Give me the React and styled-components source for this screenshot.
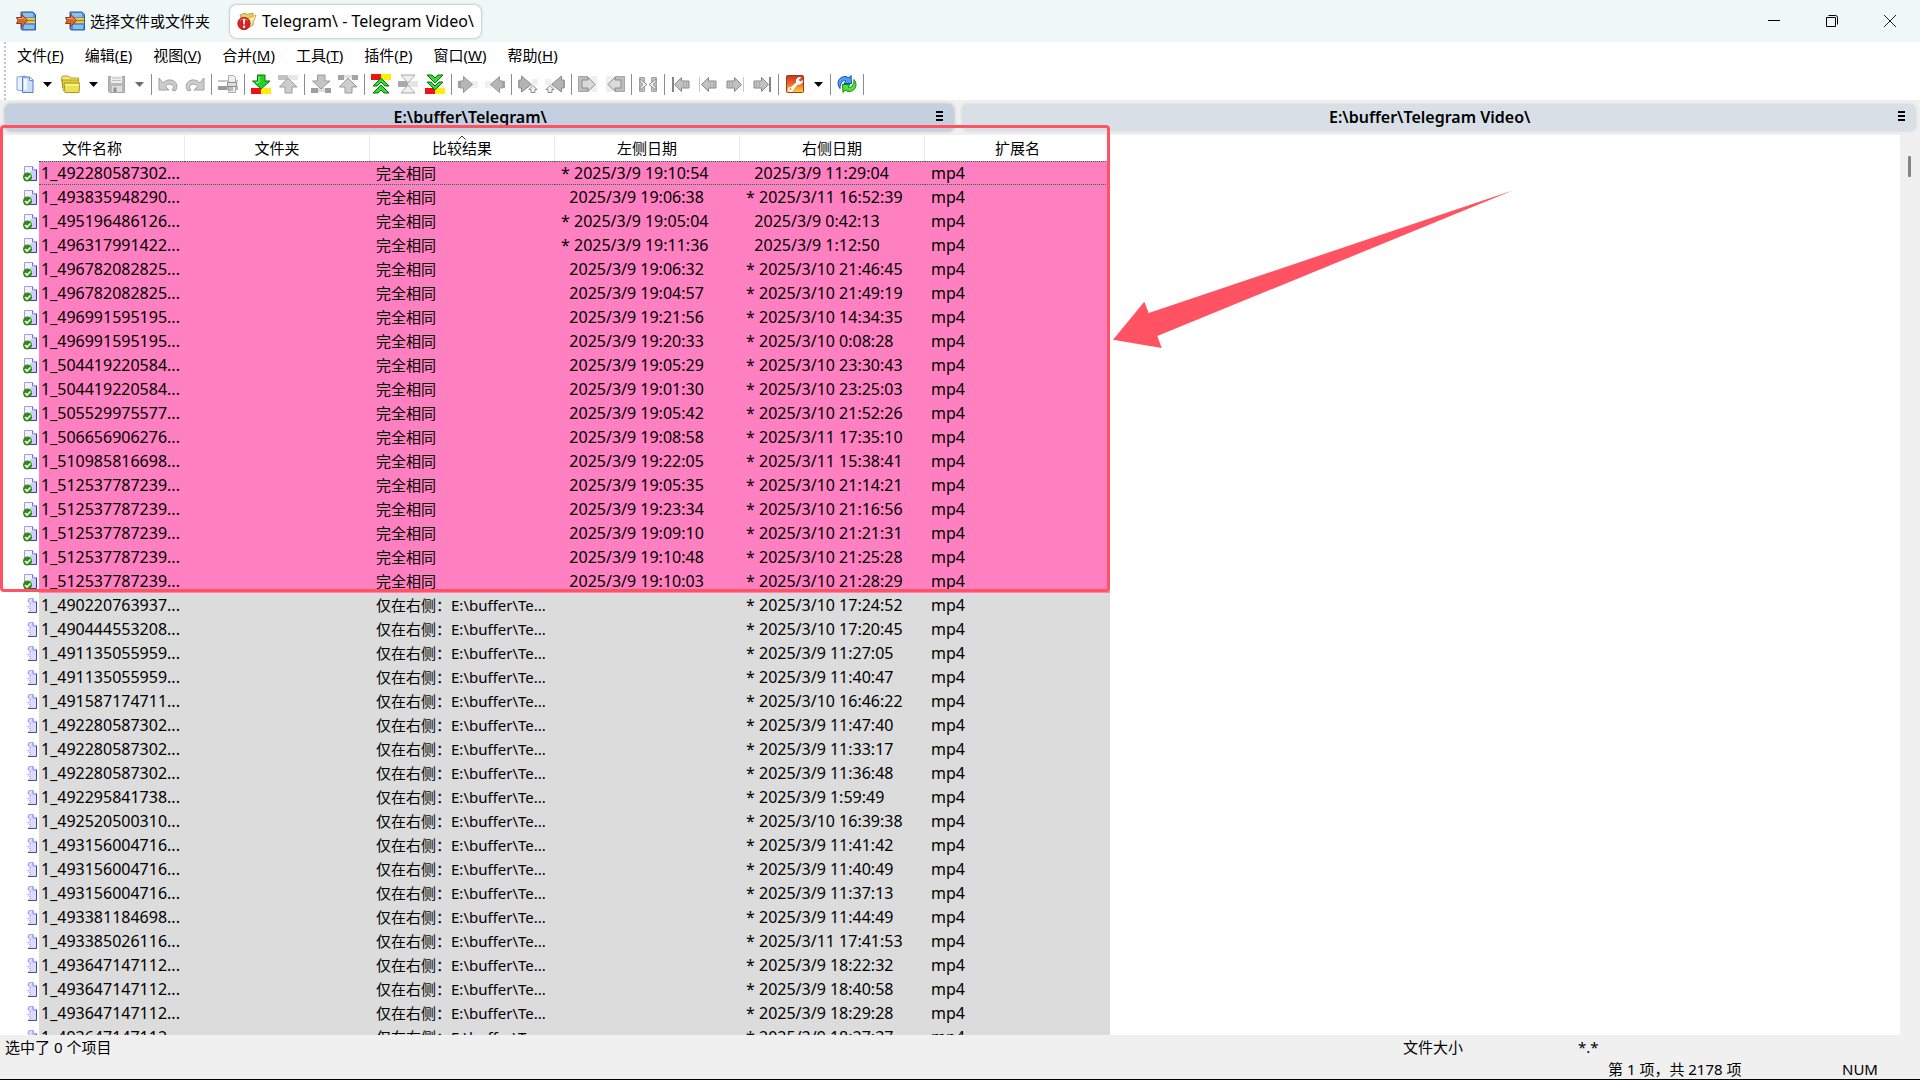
import styled, { createGlobalStyle, css } from "styled-components";

const GlobalStyle = createGlobalStyle`
  * {
    box-sizing: border-box;
  }
  body {
    margin: 0;
    overflow: hidden;
    font-family: "Noto Sans", "Noto Sans CJK SC", sans-serif;
    font-size: 15px;
    line-height: 22px;
    color: #000;
  }
  button {
    margin: 0;
    padding: 0;
    border: 0;
    background: none;
    font: inherit;
    color: inherit;
  }
  svg {
    display: block;
    flex: none;
  }
`;

const Window = styled.div`
  display: flex;
  flex-direction: column;
  height: 100vh;
  background: #f0f0f0;
  border-bottom: 1px solid #000;
`;

/* title bar */

const TitleBar = styled.header`
  display: flex;
  align-items: center;
  height: 42px;
  padding: 0 1px 0 16px;
  background: #eff8f7;
`;

const TabList = styled.nav`
  display: flex;
  align-items: center;
  flex: 1;
  gap: 13px;
  margin-left: 22px;
`;

const Tab = styled.button`
  display: flex;
  align-items: center;
  gap: 5px;
  height: 33px;
  padding: 0 7px;
  border-radius: 7px;
  white-space: nowrap;
  ${({ $active }) =>
    $active &&
    css`
      background: #fff;
      box-shadow: 0 0 2px 1px #c4cccb;
      font-size: 16px;
    `}
`;

const WindowButton = styled.button`
  display: flex;
  align-items: center;
  justify-content: center;
  width: 58px;
  height: 42px;
`;

/* menu and toolbar */

const Bars = styled.div`
  display: flex;
  height: 58px;
  padding-left: 4px;
  background: #fff;
`;

const Grip = styled.div`
  width: 7px;
  border-left: 2px dotted #c6c6c6;
`;

const BarRows = styled.div`
  flex: 1;
`;

const MenuBar = styled.nav`
  display: flex;
  height: 28px;
`;

const MenuItem = styled.button`
  height: 26px;
  padding: 0 15px 0 6px;
  white-space: nowrap;
`;

const Toolbar = styled.div`
  display: flex;
  align-items: center;
  height: 28px;
`;

const ToolButton = styled.button`
  width: 27px;
  height: 28px;
  padding: 4px 4px 4px 3px;
`;

const DropButton = styled.button`
  display: flex;
  align-items: center;
  justify-content: center;
  width: 19px;
  height: 28px;
`;

const ToolSeparator = styled.div`
  width: 6px;
  height: 21px;
  padding-left: 2px;

  &::before {
    content: "";
    display: block;
    width: 1px;
    height: 100%;
    background: #8c8c8c;
  }
`;

/* compare area */

const Workspace = styled.main`
  position: relative;
  display: flex;
  flex-direction: column;
  flex: 1;
  min-height: 0;
`;

const PathRow = styled.div`
  display: flex;
  gap: 8px;
  padding: 4px 4px 4px 5px;
`;

const PathPanel = styled.div`
  display: flex;
  align-items: flex-start;
  flex: ${({ $grow }) => $grow} 1 0;
  height: 27px;
  padding-top: 2px;
  border-radius: 6px;
  background: ${({ $active }) => ($active ? "#c4d0e0" : "#d8dfe7")};
  box-shadow: 0 0 3px 1px ${({ $active }) => ($active ? "#c9c9c9" : "#e0e0e0")};
`;

const PathTitle = styled.h2`
  flex: 1;
  margin: 0;
  font-size: 16px;
  font-weight: 600;
  line-height: 22px;
  text-align: center;
`;

const PathMenu = styled.button`
  width: 18px;
  height: 20px;
`;

const Body = styled.div`
  display: flex;
  flex: 1;
  min-height: 0;
`;

const ListPane = styled.div`
  flex: 1;
  overflow: hidden;
  background: #fff;
`;

const FileTable = styled.table`
  width: 1110px;
  table-layout: fixed;
  border-collapse: separate;
  border-spacing: 0;
`;

const HeadCell = styled.th`
  position: relative;
  height: 26px;
  padding: 0;
  border-right: 1px solid #ebebeb;
  font-weight: 400;
  line-height: 24px;

  &:last-child {
    border-right: 0;
  }
`;

const SortMark = styled.svg`
  position: absolute;
  top: 0;
  left: calc(50% - 4px);
`;

const IconCell = styled.td`
  height: 24px;
  padding: 0 0 0 22px;
  background: #fff;
`;

const Cell = styled.td`
  height: 24px;
  padding: 0 0 0 ${({ $first }) => ($first ? 2 : 6)}px;
  overflow: hidden;
  font-size: ${({ $cjk }) => ($cjk ? 15 : 16)}px;
  line-height: 22px;
  white-space: pre;
`;

const Row = styled.tr`
  ${Cell} {
    background: ${({ $same }) => ($same ? "#ff80c0" : "#dcdcdc")};
    ${({ $focused }) =>
      $focused &&
      css`
        border-top: 1px dotted #007f3f;
        border-bottom: 1px dotted #007f3f;
        line-height: 20px;
      `}
  }
`;

const ScrollTrack = styled.div`
  width: 20px;
  padding: 21px 0 0 8px;
`;

const ScrollThumb = styled.div`
  width: 3px;
  height: 21px;
  border-radius: 1px;
  background: #858585;
`;

/* red marks drawn over the list */

const MarkBox = styled.div`
  position: absolute;
  top: 25px;
  left: 0;
  width: 1110px;
  height: 467px;
  border: 3px solid #ff5263;
  border-radius: 4px;
  pointer-events: none;
`;

const MarkArrow = styled.svg`
  position: absolute;
  top: 90px;
  left: 1113px;
`;

/* status bar */

const StatusBar = styled.footer`
  height: 44px;
`;

const StatusLine = styled.div`
  display: flex;
  height: 22px;
  padding-left: 5px;
  line-height: 24px;
`;

const StatusText = styled.span`
  flex: ${({ $width }) => ($width ? `0 0 ${$width}px` : "1")};
  white-space: nowrap;
`;

const menus = [
  ["文件", "F"],
  ["编辑", "E"],
  ["视图", "V"],
  ["合并", "M"],
  ["工具", "T"],
  ["插件", "P"],
  ["窗口", "W"],
  ["帮助", "H"],
];

const columns = ["文件夹", "比较结果", "左侧日期", "右侧日期", "扩展名"];

const sameFiles = [
  ["1_492280587302...", "* 2025/3/9 19:10:54", "  2025/3/9 11:29:04"],
  ["1_493835948290...", "  2025/3/9 19:06:38", "* 2025/3/11 16:52:39"],
  ["1_495196486126...", "* 2025/3/9 19:05:04", "  2025/3/9 0:42:13"],
  ["1_496317991422...", "* 2025/3/9 19:11:36", "  2025/3/9 1:12:50"],
  ["1_496782082825...", "  2025/3/9 19:06:32", "* 2025/3/10 21:46:45"],
  ["1_496782082825...", "  2025/3/9 19:04:57", "* 2025/3/10 21:49:19"],
  ["1_496991595195...", "  2025/3/9 19:21:56", "* 2025/3/10 14:34:35"],
  ["1_496991595195...", "  2025/3/9 19:20:33", "* 2025/3/10 0:08:28"],
  ["1_504419220584...", "  2025/3/9 19:05:29", "* 2025/3/10 23:30:43"],
  ["1_504419220584...", "  2025/3/9 19:01:30", "* 2025/3/10 23:25:03"],
  ["1_505529975577...", "  2025/3/9 19:05:42", "* 2025/3/10 21:52:26"],
  ["1_506656906276...", "  2025/3/9 19:08:58", "* 2025/3/11 17:35:10"],
  ["1_510985816698...", "  2025/3/9 19:22:05", "* 2025/3/11 15:38:41"],
  ["1_512537787239...", "  2025/3/9 19:05:35", "* 2025/3/10 21:14:21"],
  ["1_512537787239...", "  2025/3/9 19:23:34", "* 2025/3/10 21:16:56"],
  ["1_512537787239...", "  2025/3/9 19:09:10", "* 2025/3/10 21:21:31"],
  ["1_512537787239...", "  2025/3/9 19:10:48", "* 2025/3/10 21:25:28"],
  ["1_512537787239...", "  2025/3/9 19:10:03", "* 2025/3/10 21:28:29"],
];

const rightFiles = [
  ["1_490220763937...", "* 2025/3/10 17:24:52"],
  ["1_490444553208...", "* 2025/3/10 17:20:45"],
  ["1_491135055959...", "* 2025/3/9 11:27:05"],
  ["1_491135055959...", "* 2025/3/9 11:40:47"],
  ["1_491587174711...", "* 2025/3/10 16:46:22"],
  ["1_492280587302...", "* 2025/3/9 11:47:40"],
  ["1_492280587302...", "* 2025/3/9 11:33:17"],
  ["1_492280587302...", "* 2025/3/9 11:36:48"],
  ["1_492295841738...", "* 2025/3/9 1:59:49"],
  ["1_492520500310...", "* 2025/3/10 16:39:38"],
  ["1_493156004716...", "* 2025/3/9 11:41:42"],
  ["1_493156004716...", "* 2025/3/9 11:40:49"],
  ["1_493156004716...", "* 2025/3/9 11:37:13"],
  ["1_493381184698...", "* 2025/3/9 11:44:49"],
  ["1_493385026116...", "* 2025/3/11 17:41:53"],
  ["1_493647147112...", "* 2025/3/9 18:22:32"],
  ["1_493647147112...", "* 2025/3/9 18:40:58"],
  ["1_493647147112...", "* 2025/3/9 18:29:28"],
  ["1_493647147112...", "* 2025/3/9 18:27:37"],
];

const GRAY = "#b4b4b4";
const EDGE = "#8e8e8e";
const PALE = "#e4e4e4";

function Icon({ children, size = 20 }) {
  return (
    <svg width={size} height={size} viewBox="0 0 20 20" aria-hidden="true">
      {children}
    </svg>
  );
}

const AppIcon = () => (
  <Icon>
    <path d="M5 1h12l2.500 2.500V19H6l-1-1z" fill="#4d94dc" stroke="#2c5f9e" />
    <path d="M7 3h10M7 5h10M8 15h10M8 17h10" stroke="#d3e8fb" />
    <path d="M6 7h13v5H6z" fill="#f6c33b" />
    <path d="M8 9.500h11" stroke="#a87614" />
    <path d="M.5 6.500h5V3l6 6.500-6 6.500v-3.500h-5l1.500-3z" fill="#d9662d" stroke="#8d3d1d" />
    <path d="M2 7.500h4.500V6l3 3" stroke="#f2a673" fill="none" />
  </Icon>
);

const WarnFolderIcon = () => (
  <Icon>
    <path d="M3 4l5-2 2 1.500L16 2v12l-8 4z" fill="#e8cf6a" stroke="#a88f35" strokeWidth=".8" />
    <path d="M9 8l10-4-4 11-8 3z" fill="#fbeea0" stroke="#b89f3e" strokeWidth=".8" />
    <circle cx="7" cy="12.500" r="6.300" fill="#d42323" stroke="#a11414" strokeWidth=".6" />
    <path d="M3 9.500a5 4 0 0 1 8 0" fill="none" stroke="#ef7b7b" />
    <path d="M6 8h2.200l-.4 5.500H6.400z" fill="#fff" />
    <circle cx="7.100" cy="15.700" r="1.200" fill="#fff" />
  </Icon>
);

const NewIcon = () => (
  <Icon>
    <path d="M3 3l8-1v15l-8-1z" fill="#e9f1fd" stroke="#7fa4df" />
    <path d="M8.500 3h7L19 6v12.500H8.500z" fill="#c9ddf9" stroke="#4f7dc8" />
    <path d="M10 5h3v11h-3z" fill="#f4f9ff" />
    <path d="M15.500 3v3.500H19" fill="#f7fbff" stroke="#5f8ad0" />
  </Icon>
);

const FolderIcon = () => (
  <Icon>
    <path d="M1.500 4l1-2h6l2 2h8v3h-16z" fill="#f4ea73" stroke="#b39f24" />
    <path d="M2.500 14V6h16v10" fill="#e5d33d" stroke="#b39f24" />
    <path d="M1.500 5l2 12" stroke="#b39f24" />
    <path d="M4 9h16l-1 9.500H5z" fill="#eee04e" stroke="#a99523" />
    <path d="M5.500 11h13" stroke="#fbf6a8" strokeWidth="1.500" />
  </Icon>
);

const SaveIcon = () => (
  <Icon>
    <path d="M2.500 2.500h16v16h-15l-1-1z" fill="#b8b8b8" stroke="#a3a3a3" />
    <path d="M5 2h11v7H5z" fill="#efefef" />
    <path d="M6 4h9M6 6.500h9" stroke="#c2c2c2" />
    <path d="M6 12h10v6H6z" fill="#dedede" />
    <path d="M7.500 13.500h3V18h-3z" fill="#919191" />
  </Icon>
);

const undoPath =
  "M1 4v12h10l-3.500-3.500c2-3 6-3.500 8.500.5l-2 3 3 1c4-5 1-10-4-11-3-.5-6 .8-8 3z";

const UndoIcon = () => (
  <Icon>
    <path d={undoPath} fill="#cccccc" stroke="#a2a2a2" strokeLinejoin="round" />
  </Icon>
);

const RedoIcon = () => (
  <Icon>
    <path
      d={undoPath}
      transform="matrix(-1 0 0 1 20 0)"
      fill="#cccccc"
      stroke="#a2a2a2"
      strokeLinejoin="round"
    />
  </Icon>
);

const CompareIcon = () => (
  <Icon>
    <path d="M0 6h20v2H0z" fill="#c7c7c7" />
    <path d="M0 12h20v4H0z" fill="#b9b9b9" />
    <path d="M0 12h9v4H0z" fill="#999" />
    <path d="M10.500 1.500h5l2 2v15h-7z" fill="#efefef" stroke="#aaa" />
    <path d="M9.500 8.500h9v4h-9z" fill="#ddd" stroke={EDGE} />
    <path d="M11 13h4v4h-4z" fill="#b8b8b8" />
  </Icon>
);

const arrowDown = "M6.500 1h7.500v6h5L10 15 1.500 7h5z";
const arrowUp = "M7 19v-6H1.500L10 4l9 9H14v6z";

/* blocks: the coloured bars that show which pane a jump goes to */
const Blocks = ({ y, left, right, height = 5 }) => (
  <>
    <rect x="0" y={y} width="10" height={height} fill={left} />
    <rect x="10" y={y} width="10" height={height} fill={right} />
  </>
);

const NextDiffIcon = () => (
  <Icon>
    <Blocks y={14} left="#ee1111" right="#ffee00" height={6} />
    <path d={arrowDown} fill="#25d325" stroke="#087208" />
    <path d="M8 2.500v6H5" stroke="#a8f5a0" fill="none" />
  </Icon>
);

const PrevDiffIcon = () => (
  <Icon>
    <Blocks y={1} left="#c2c2c2" right="#e8e8e8" height={5} />
    <path d={arrowUp} fill="#cdcdcd" stroke="#9c9c9c" />
  </Icon>
);

const NextConflictIcon = () => (
  <Icon>
    <path d="M0 14h7v5H0zM14 14h6v5h-6z" fill="#9e9e9e" />
    <path d="M7 14h7v4H7z" fill="#dedede" />
    <path d={arrowDown} fill="#c4c4c4" stroke="#999" />
  </Icon>
);

const PrevConflictIcon = () => (
  <Icon>
    <path d="M0 1h6v5H0zM14 1h6v5h-6z" fill="#a4a4a4" />
    <path d="M6 1h8v3H6z" fill="#e2e2e2" />
    <path d={arrowUp} fill="#cdcdcd" stroke="#999" />
  </Icon>
);

const FirstDiffIcon = () => (
  <Icon>
    <Blocks y={0} left="#ee1111" right="#ffee00" height={6} />
    <path d="M2 12l8-8 8 8h-4l-4-4-4 4z" fill="#35dc35" stroke="#087208" />
    <path d="M2 19l8-8 8 8h-5l-3-3-3 3z" fill="#35dc35" stroke="#087208" />
  </Icon>
);

const CurrentDiffIcon = () => (
  <Icon>
    <Blocks y={7} left="#a9a9a9" right={PALE} height={6} />
    <path d="M3 1h14l-7 8zM10 11l7 8H3z" fill="#efefef" stroke="#ababab" />
  </Icon>
);

const LastDiffIcon = () => (
  <Icon>
    <Blocks y={14} left="#ee1111" right="#ffee00" height={6} />
    <path d="M2 1h5l3 3 3-3h5l-8 8z" fill="#35dc35" stroke="#087208" />
    <path d="M2 8h4l4 4 4-4h4l-8 8z" fill="#35dc35" stroke="#087208" />
  </Icon>
);

/* flip mirrors the drawing, so each pair of copy buttons shares one path */
const Flip = ({ on, children }) => (
  <g transform={on ? "matrix(-1 0 0 1 20 0)" : undefined}>{children}</g>
);

const CopyIcon = ({ left }) => (
  <Icon>
    <Flip on={left}>
      <path d="M0 7h6v7H0z" fill="#a3a3a3" />
      <path d="M13 7h7v7h-7z" fill="#f0f0f0" />
      <path d="M5.500 7V2.500l9 8-9 8V14H2V7z" fill="#b7b7b7" stroke="#959595" />
    </Flip>
  </Icon>
);

const CopyNextIcon = ({ left }) => (
  <Icon>
    <Flip on={left}>
      <path d="M0 6h5v8H0z" fill="#b1b1b1" />
      <path d="M14 5h6v6h-6z" fill="#efefef" />
      <path d="M3.500 6V2l10 8.500-10 7.500v-4H1V6z" fill={GRAY} stroke="#8d8d8d" />
      <path d="M15 11.500l4 4h-2v3h-4v-3h-2z" fill="#eee" stroke="#8d8d8d" />
    </Flip>
  </Icon>
);

const CopyAllIcon = ({ left }) => (
  <Icon>
    <Flip on={left}>
      <path d="M13 2h6v16h-6z" fill="#efefef" />
      <path d="M.5 2.500h9v15h-9z" fill="#bdbdbd" stroke="#a6a6a6" />
      <path d="M4 6h6V3l7 7.500-7 7V14H4z" fill="#dadada" stroke="#8d8d8d" />
    </Flip>
  </Icon>
);

const MergeIcon = () => (
  <Icon>
    <path d="M1.500 3.500h5v14h-5zM13.500 3.500h5v14h-5z" fill="#c2c2c2" stroke="#a6a6a6" />
    <path
      d="M2 5l7 5.500L2 16v-3l3-2.500L2 8zM18 5l-7 5.500 7 5.500v-3l-3-2.500L18 8z"
      fill="#eee"
      stroke="#8c8c8c"
    />
  </Icon>
);

const FileNavIcon = ({ right, edge }) => (
  <Icon>
    <Flip on={right}>
      <path d={edge ? "M1 3h2v15H1z" : "M1 3h1v15H1z"} fill={edge ? "#858585" : "#c8c8c8"} />
      <path d="M10.500 3.500V7H18v7h-7.500v3.500l-7-7z" fill="#c2c2c2" stroke="#888" />
      <path d="M12.500 7.500v6M15.500 7.500v6" stroke="#aaa" />
    </Flip>
  </Icon>
);

const OptionsIcon = () => (
  <Icon>
    <defs>
      <linearGradient id="options-fill" x1="0" y1="0" x2="0" y2="1">
        <stop offset="0" stopColor="#c43420" />
        <stop offset=".5" stopColor="#ee6a2c" />
        <stop offset="1" stopColor="#ffd83a" />
      </linearGradient>
    </defs>
    <rect x="1.500" y="1.500" width="17" height="17" rx="1" fill="url(#options-fill)" stroke="#9c3a22" />
    <path
      d="M16.500 3.500a4 4 0 0 0-5.500 5l-5 4.500a2.500 2.500 0 1 0 2 3l5-5.500a4 4 0 0 0 5-4.500l-2.500 1.500-2-1.500z"
      fill="#fff"
    />
    <circle cx="5.500" cy="15" r="1" fill="#f08a35" />
  </Icon>
);

const RefreshIcon = () => (
  <Icon>
    <path
      d="M3 14.500C-1.500 9 2 2 9 2.500l3 1.500 2-2.500.5 8H7l2-2.500c-3-1.500-6 1.500-6 7.500z"
      fill="#4ba0f4"
      stroke="#1450b4"
    />
    <path
      d="M17 5.500c4.500 5.500 1 12.500-6 12L8 16l-2 2.500-.5-8H13L11 13c3 1.500 6-1.500 6-7.500z"
      fill="#52e03a"
      stroke="#138a12"
    />
  </Icon>
);

const Caret = ({ color = "#000" }) => (
  <svg width="9" height="5" viewBox="0 0 9 5" aria-hidden="true">
    <path d="M0 0h9L4.500 5z" fill={color} />
  </svg>
);

const ListIcon = () => (
  <svg width="7" height="20" viewBox="0 0 7 20" aria-hidden="true">
    <path d="M0 6h7M0 10h7M0 14h7" stroke="#000" strokeWidth="2" />
  </svg>
);

const SameFileIcon = () => (
  <svg width="16" height="18" viewBox="0 0 16 18" aria-hidden="true">
    <path d="M2.500 2.500h8L14 6v10.500H2.500z" fill="#f2f3ff" stroke="#9c9ce8" />
    <path d="M8 7h5.500v9H8z" fill="#ced0fa" />
    <path d="M10.500 2.500V6H14" fill="#fff" stroke="#6c6cf0" />
    <path d="M14.500 5.500v11H8" fill="none" stroke="#3c3c94" />
    <circle cx="5.500" cy="13" r="4.500" fill="#2f8a14" />
    <path d="M3 13l2 2 3.500-3.500" fill="none" stroke="#fff" strokeWidth="1.600" />
  </svg>
);

const RightFileIcon = () => (
  <svg width="16" height="18" viewBox="0 0 16 18" aria-hidden="true">
    <path d="M6 2.500h5L14 6v10.500H6L9 14l-3-3 2-2.500L6 6z" fill="#dcdcff" />
    <path
      d="M6 5l1-2.500h4L14 6M6 5l2.500 3L6 10.500 9 14l-3 2.500"
      fill="none"
      stroke="#9090e4"
      strokeDasharray="2 1"
    />
    <path d="M11 2.500V6h3" fill="#fff" stroke="#7c7cf0" />
    <path d="M14.500 5.500v11H6" fill="none" stroke="#4646a4" />
  </svg>
);

/* "|" is a separator, an item with drop gets an arrow button after it */
const tools = [
  { label: "新建", icon: <NewIcon />, drop: "#000" },
  { label: "打开", icon: <FolderIcon />, drop: "#000" },
  { label: "保存", icon: <SaveIcon />, drop: "#6d6d6d" },
  "|",
  { label: "撤销", icon: <UndoIcon /> },
  { label: "重做", icon: <RedoIcon /> },
  "|",
  { label: "行内差异", icon: <CompareIcon /> },
  "|",
  { label: "下一个差异", icon: <NextDiffIcon /> },
  { label: "上一个差异", icon: <PrevDiffIcon /> },
  "|",
  { label: "下一个冲突", icon: <NextConflictIcon /> },
  { label: "上一个冲突", icon: <PrevConflictIcon /> },
  "|",
  { label: "第一个差异", icon: <FirstDiffIcon /> },
  { label: "当前差异", icon: <CurrentDiffIcon /> },
  { label: "最后一个差异", icon: <LastDiffIcon /> },
  "|",
  { label: "复制到右侧", icon: <CopyIcon /> },
  { label: "复制到左侧", icon: <CopyIcon left /> },
  "|",
  { label: "复制到右侧并前进", icon: <CopyNextIcon /> },
  { label: "复制到左侧并前进", icon: <CopyNextIcon left /> },
  "|",
  { label: "全部复制到右侧", icon: <CopyAllIcon /> },
  { label: "全部复制到左侧", icon: <CopyAllIcon left /> },
  "|",
  { label: "自动合并", icon: <MergeIcon /> },
  "|",
  { label: "第一个文件", icon: <FileNavIcon edge /> },
  { label: "上一个文件", icon: <FileNavIcon /> },
  { label: "下一个文件", icon: <FileNavIcon right /> },
  { label: "最后一个文件", icon: <FileNavIcon right edge /> },
  "|",
  { label: "选项", icon: <OptionsIcon />, drop: "#000" },
  "|",
  { label: "刷新", icon: <RefreshIcon /> },
  "|",
];

function TitleArea() {
  return (
    <TitleBar>
      <AppIcon />
      <TabList>
        <Tab>
          <AppIcon />
          选择文件或文件夹
        </Tab>
        <Tab $active>
          <WarnFolderIcon />
          Telegram\ - Telegram Video\
        </Tab>
      </TabList>
      <WindowButton aria-label="最小化">
        <svg width="12" height="12" viewBox="0 0 12 12">
          <path d="M0 5.500h12" stroke="#000" />
        </svg>
      </WindowButton>
      <WindowButton aria-label="还原">
        <svg width="12" height="12" viewBox="0 0 12 12">
          <path d="M.5 2.500h9v9h-9zM2.500.5h7a2 2 0 0 1 2 2v7" fill="none" stroke="#000" />
        </svg>
      </WindowButton>
      <WindowButton aria-label="关闭">
        <svg width="12" height="12" viewBox="0 0 12 12">
          <path d="M0 0l12 12M12 0L0 12" stroke="#222" />
        </svg>
      </WindowButton>
    </TitleBar>
  );
}

function CommandBars() {
  return (
    <Bars>
      <Grip />
      <BarRows>
        <MenuBar>
          {menus.map(([text, key]) => (
            <MenuItem key={key}>
              {text}(<u>{key}</u>)
            </MenuItem>
          ))}
        </MenuBar>
        <Toolbar>
          {tools.map((tool, index) => {
            if (tool === "|") return <ToolSeparator key={index} />;
            return [
              <ToolButton key={tool.label} aria-label={tool.label}>
                {tool.icon}
              </ToolButton>,
              tool.drop && (
                <DropButton key={`${tool.label}-drop`} aria-label={`${tool.label}菜单`}>
                  <Caret color={tool.drop} />
                </DropButton>
              ),
            ];
          })}
        </Toolbar>
      </BarRows>
    </Bars>
  );
}

function FileList() {
  return (
    <FileTable>
      <colgroup>
        <col width="39" />
        <col width="146" />
        {columns.map((name) => (
          <col key={name} width="185" />
        ))}
      </colgroup>
      <thead>
        <tr>
          <HeadCell colSpan={2}>文件名称</HeadCell>
          {columns.map((name) => (
            <HeadCell key={name}>
              {name}
              {name === "比较结果" && (
                <SortMark width="8" height="5" viewBox="0 0 8 5">
                  <path d="M.5 4.500L4 1l3.500 3.500" fill="none" stroke="#333" />
                </SortMark>
              )}
            </HeadCell>
          ))}
        </tr>
      </thead>
      <tbody>
        {sameFiles.map(([name, leftDate, rightDate], index) => (
          <Row key={index} $same $focused={index === 0}>
            <IconCell>
              <SameFileIcon />
            </IconCell>
            <Cell $first>{name}</Cell>
            <Cell />
            <Cell $cjk>完全相同</Cell>
            <Cell>{leftDate}</Cell>
            <Cell>{rightDate}</Cell>
            <Cell>mp4</Cell>
          </Row>
        ))}
        {rightFiles.map(([name, rightDate], index) => (
          <Row key={index}>
            <IconCell>
              <RightFileIcon />
            </IconCell>
            <Cell $first>{name}</Cell>
            <Cell />
            <Cell $cjk>仅在右侧：E:\buffer\Te...</Cell>
            <Cell />
            <Cell>{rightDate}</Cell>
            <Cell>mp4</Cell>
          </Row>
        ))}
      </tbody>
    </FileTable>
  );
}

function App() {
  return (
    <Window lang="zh-CN">
      <GlobalStyle />
      <TitleArea />
      <CommandBars />
      <Workspace>
        <PathRow>
          <PathPanel $active $grow={948}>
            <PathTitle>E:\buffer\Telegram\</PathTitle>
            <PathMenu aria-label="左侧菜单">
              <ListIcon />
            </PathMenu>
          </PathPanel>
          <PathPanel $grow={954}>
            <PathTitle>E:\buffer\Telegram Video\</PathTitle>
            <PathMenu aria-label="右侧菜单">
              <ListIcon />
            </PathMenu>
          </PathPanel>
        </PathRow>
        <Body>
          <ListPane>
            <FileList />
          </ListPane>
          <ScrollTrack>
            <ScrollThumb />
          </ScrollTrack>
        </Body>
        <MarkBox />
        <MarkArrow width="401" height="159" viewBox="0 0 401 159">
          <path d="M0 149.700l31.300-38 4.400 11.300L400.300.3 44.300 146l4.400 12z" fill="#ff5263" />
        </MarkArrow>
      </Workspace>
      <StatusBar>
        <StatusLine>
          <StatusText>选中了 0 个项目</StatusText>
          <StatusText $width={175}>文件大小</StatusText>
          <StatusText $width={342}>*.*</StatusText>
        </StatusLine>
        <StatusLine>
          <StatusText />
          <StatusText $width={234}>第 1 项，共 2178 项</StatusText>
          <StatusText $width={78}>NUM</StatusText>
        </StatusLine>
      </StatusBar>
    </Window>
  );
}

export default App;
